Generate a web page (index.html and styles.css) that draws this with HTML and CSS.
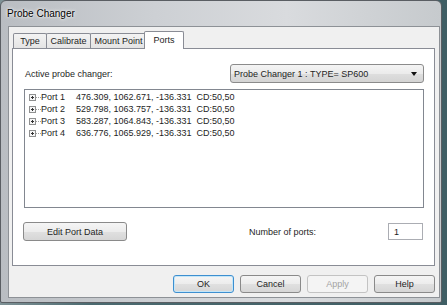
FILE: index.html
```html
<!DOCTYPE html>
<html>
<head>
<meta charset="utf-8">
<link rel="stylesheet" href="styles.css">
</head>
<body>
<div class="window">
  <div class="titlebar">Probe Changer</div>
  <div class="client">
    <div class="tabs">
      <div class="tab tab-type">Type</div>
      <div class="tab tab-cal">Calibrate</div>
      <div class="tab tab-mount">Mount Point</div>
      <div class="tab tab-ports active">Ports</div>
    </div>
    <div class="panel">
      <div class="top">
        <span class="label">Active probe changer:</span>
        <div class="combo"><span>Probe Changer 1 : TYPE= SP600</span><span class="arrow"></span></div>
      </div>
      <div class="list">
        <div class="item"><svg class="exp" width="7" height="7" viewBox="0 0 7 7"><rect x="0.5" y="0.5" width="6" height="6" fill="#f6f6f6" stroke="#8f9090"/><path d="M2 3.5H5M3.5 2V5" stroke="#333" stroke-width="1"/></svg><span class="dots"></span><span class="name">Port 1</span><span>476.309, 1062.671, -136.331&nbsp; CD:50,50</span></div>
        <div class="item"><svg class="exp" width="7" height="7" viewBox="0 0 7 7"><rect x="0.5" y="0.5" width="6" height="6" fill="#f6f6f6" stroke="#8f9090"/><path d="M2 3.5H5M3.5 2V5" stroke="#333" stroke-width="1"/></svg><span class="dots"></span><span class="name">Port 2</span><span>529.798, 1063.757, -136.331&nbsp; CD:50,50</span></div>
        <div class="item"><svg class="exp" width="7" height="7" viewBox="0 0 7 7"><rect x="0.5" y="0.5" width="6" height="6" fill="#f6f6f6" stroke="#8f9090"/><path d="M2 3.5H5M3.5 2V5" stroke="#333" stroke-width="1"/></svg><span class="dots"></span><span class="name">Port 3</span><span>583.287, 1064.843, -136.331&nbsp; CD:50,50</span></div>
        <div class="item"><svg class="exp" width="7" height="7" viewBox="0 0 7 7"><rect x="0.5" y="0.5" width="6" height="6" fill="#f6f6f6" stroke="#8f9090"/><path d="M2 3.5H5M3.5 2V5" stroke="#333" stroke-width="1"/></svg><span class="dots"></span><span class="name">Port 4</span><span>636.776, 1065.929, -136.331&nbsp; CD:50,50</span></div>
      </div>
      <div class="bottom">
        <div class="btn btn-edit">Edit Port Data</div>
        <span class="nports">Number of ports:</span>
        <div class="num">1</div>
      </div>
    </div>
    <div class="actions">
      <div class="btn btn-ok">OK</div>
      <div class="btn">Cancel</div>
      <div class="btn btn-disabled">Apply</div>
      <div class="btn">Help</div>
    </div>
  </div>
</div>
</body>
</html>
```

FILE: styles.css
```css
* { box-sizing: border-box; }
body {
  margin: 0;
  width: 447px;
  height: 305px;
  overflow: hidden;
  background: linear-gradient(to right, #7f9296 0%, #4b6a70 20%, #3f5e64 100%);
  font-family: "Liberation Sans", Arial, sans-serif;
  font-size: 9px;
  color: #1e1e1e;
}
.window {
  width: 442px;
  height: 303px;
  border: 1px solid #5a5e63;
  border-radius: 6px 6px 2px 2px;
  background: linear-gradient(to right, #b9bdc2 0%, #cdd0d4 35%, #d9dbde 65%, #c6cacd 100%);
  display: flex;
  flex-direction: column;
}
.titlebar {
  height: 25px;
  padding-left: 6px;
  display: flex;
  align-items: center;
  font-size: 10px;
  color: #000;
  text-shadow: 0 0 4px #ffffff, 0 0 2px #ffffff;
}
.client {
  margin: 0 1px 0 7px;
  height: 272px;
  border: 1px solid #8d9196;
  background: #f0f0f0;
  padding: 4px 4px 0 3px;
  display: flex;
  flex-direction: column;
}
.tabs {
  display: flex;
  align-items: flex-end;
  height: 17px;
  padding-left: 1px;
}
.tab {
  height: 15px;
  border: 1px solid #898c95;
  border-bottom: none;
  border-radius: 2px 2px 0 0;
  background: linear-gradient(#f3f3f3, #e4e4e4);
  margin-right: -1px;
  display: flex;
  align-items: center;
  justify-content: center;
}
.tab-type { width: 34px; }
.tab-cal { width: 45px; }
.tab-mount { width: 57px; }
.tab.active {
  width: 40px;
  height: 18px;
  margin-left: -2px;
  margin-bottom: -1px;
  padding-bottom: 1px;
  background: #fff;
  position: relative;
  z-index: 1;
}
.panel {
  width: 423px;
  height: 218px;
  border: 1px solid #898c95;
  background: #fff;
  padding: 15px 10px 0 11px;
}
.top {
  display: flex;
  align-items: center;
  justify-content: space-between;
  height: 19px;
}
.label { margin-left: 1px; }
.combo {
  width: 194px;
  height: 19px;
  border: 1px solid #8b8b8b;
  border-radius: 3px;
  background: linear-gradient(#f4f4f4, #ebebeb 50%, #dedede 51%, #d4d4d4);
  padding: 0 6px 0 3px;
  display: flex;
  align-items: center;
  justify-content: space-between;
}
.arrow {
  width: 0;
  height: 0;
  border-left: 3px solid transparent;
  border-right: 3px solid transparent;
  border-top: 4px solid #111;
}
.list {
  margin-top: 6px;
  height: 119px;
  border: 1px solid #828790;
  padding-top: 1px;
}
.item {
  height: 12px;
  display: flex;
  align-items: center;
  padding-left: 4px;
  white-space: nowrap;
}
.exp { flex: none; }
.dots {
  width: 5px;
  margin: 0 0 0 0;
  border-top: 1px dotted #a0a0a0;
}
.name { width: 35px; }
.bottom {
  margin-top: 14px;
  display: flex;
  align-items: center;
  height: 19px;
}
.btn {
  width: 61px;
  height: 18px;
  border: 1px solid #8a8a8a;
  border-radius: 3px;
  background: linear-gradient(#f5f5f5, #ececec 50%, #e0e0e0 51%, #d6d6d6);
  display: flex;
  align-items: center;
  justify-content: center;
}
.btn-edit {
  width: 104px;
  height: 19px;
  margin-left: -1px;
}
.nports { margin-left: 122px; }
.num {
  margin-left: auto;
  margin-right: 1px;
  width: 35px;
  height: 17px;
  border: 1px solid #abadb3;
  background: #fff;
  padding-left: 5px;
  display: flex;
  align-items: center;
}
.actions {
  margin-top: 9px;
  display: flex;
  justify-content: flex-end;
  gap: 6px;
}
.btn-ok {
  border-color: #3d8fd0;
  box-shadow: inset 0 0 0 1px #c4e6f8;
}
.btn-disabled {
  color: #a3a3a3;
  border-color: #c3c3c3;
  background: #f4f4f4;
}
```
